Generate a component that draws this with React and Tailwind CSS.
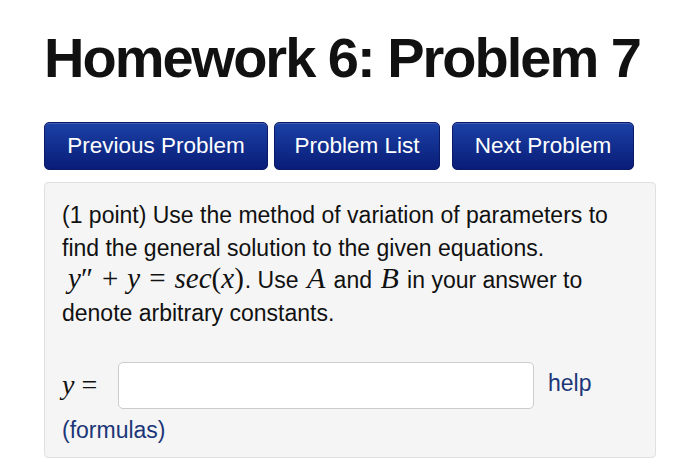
export default function App() {
  const btn =
    "h-[48px] rounded-[5px] border border-[#0a1a66] bg-gradient-to-b from-[#1b41a6] to-[#0a1c78] text-white text-[22.5px] shadow-[inset_0_1px_0_rgba(255,255,255,0.15)]";
  const mi = { fontFamily: '"Liberation Serif", serif' };

  return (
    <div className="w-[700px] h-[466px] bg-white overflow-hidden pl-[44px] pt-[26px] text-[#111]" style={{ fontFamily: '"Liberation Sans", Arial, sans-serif' }}>
      <h1 className="text-[56px] leading-[64px] font-bold tracking-[-2px] whitespace-nowrap">Homework 6: Problem 7</h1>

      <div className="flex gap-[6px] mt-[32px]">
        <button className={`${btn} w-[224px]`}>Previous Problem</button>
        <button className={`${btn} w-[166px]`}>Problem List</button>
        <button className={`${btn} w-[182px] ml-[6px]`}>Next Problem</button>
      </div>

      <div className="mt-[12px] w-[612px] h-[276px] rounded-[4px] border border-[#e0e0e0] bg-[#f5f5f5] px-[17px] pt-[16px]">
        <p className="text-[23px] leading-[32.7px] whitespace-nowrap">
          (1 point) Use the method of variation of parameters to
          <br />
          find the general solution to the given equations.
          <br />
          <span className="text-[29px] ml-[6px] mr-[1px] leading-[20px]" style={mi}>
            <i>y</i>″<span className="mx-[9px]">+</span><i>y</i><span className="mx-[9px]">=</span><i>sec</i>(<i>x</i>)
          </span>
          . Use <i className="text-[30px] leading-[20px] mx-[2px]" style={mi}>A</i> and <i className="text-[30px] leading-[20px] mx-[2px]" style={mi}>B</i> in your answer to
          <br />
          denote arbitrary constants.
        </p>

        <div className="flex items-center mt-[32px]">
          <span className="text-[28px] w-[56px]" style={mi}>
            <i>y</i><span className="ml-[7px]">=</span>
          </span>
          <div className="w-[416px] h-[47px] bg-white border border-[#cccccc] rounded-[5px]" />
          <span className="ml-[14px] text-[23px] text-[#1c3578] -mt-[4px]">help</span>
        </div>
        <div className="mt-[5px] text-[23px] text-[#1c3578] leading-[32px]">(formulas)</div>
      </div>
    </div>
  );
}
